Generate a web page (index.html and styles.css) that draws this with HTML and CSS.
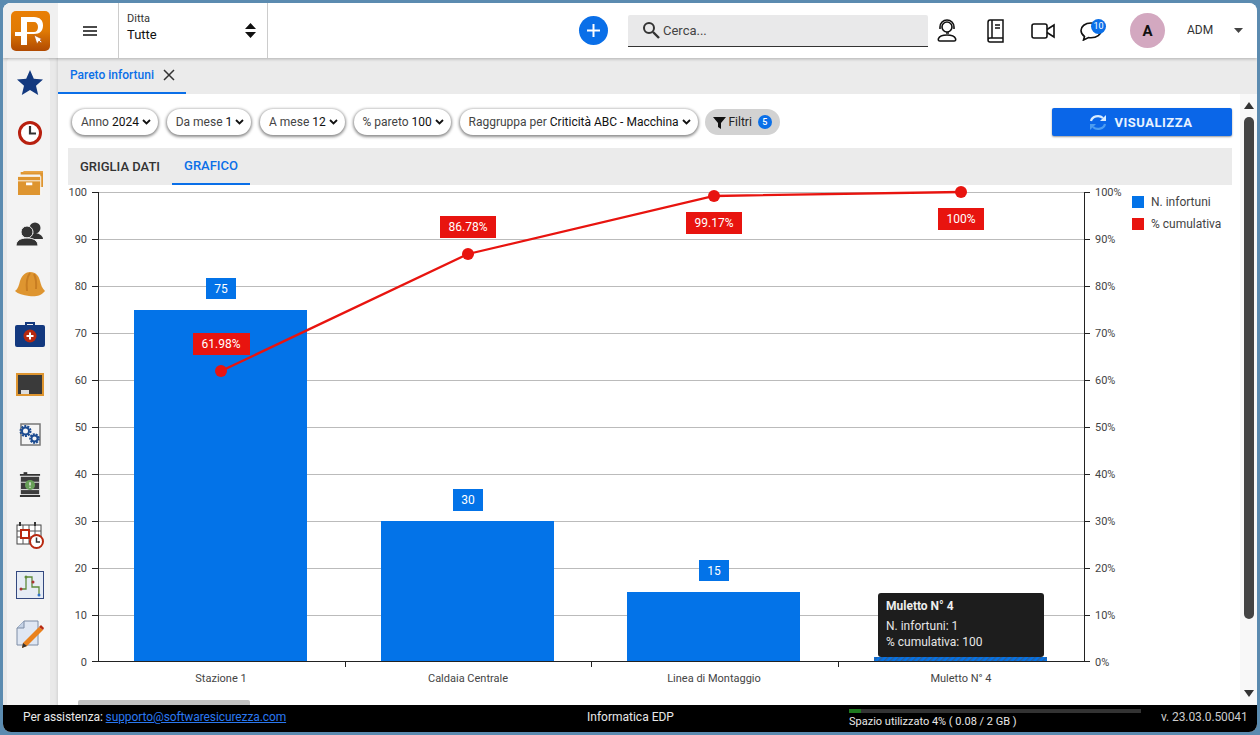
FILE: index.html
```html
<!DOCTYPE html>
<html lang="it">
<head>
<meta charset="utf-8">
<title>Pareto infortuni</title>
<link rel="stylesheet" href="styles.css">
</head>
<body>
<div class="app">
  <header class="topbar">
    <div class="logo-cell">
      <svg class="logo" width="39" height="40" viewBox="0 0 39 40">
        <defs><linearGradient id="lg" x1="0" y1="0" x2="0" y2="1"><stop offset="0" stop-color="#e97f05"/><stop offset=".5" stop-color="#e07a05"/><stop offset="1" stop-color="#b04a02"/></linearGradient></defs>
        <rect width="39" height="40" rx="5" fill="url(#lg)"/>
        <path fill-rule="evenodd" d="M10 6h13c6 0 9 3.500 9 8.500s-3 8.500-9 8.500h-7v11h-6V25H4v-4h6zM16 11v10h7c2.500 0 4-2 4-5s-1.500-5-4-5z" fill="#fff"/>
        <path d="M23 24l3 9 2-3 2 2 1-1-2-2 2-1z" fill="#fff" stroke="#b04a02" stroke-width=".6"/>
      </svg>
    </div>
    <div class="menu-cell">
      <svg width="14" height="10" viewBox="0 0 14 10"><path d="M0 1h14M0 5h14M0 9h14" stroke="#111" stroke-width="1.600"/></svg>
    </div>
    <div class="ditta-cell">
      <div class="ditta-text"><span class="ditta-label">Ditta</span><span class="ditta-value">Tutte</span></div>
      <svg width="11" height="15" viewBox="0 0 11 15"><path d="M5.500 0L11 6H0zM5.500 15L0 9h11z" fill="#111"/></svg>
    </div>
    <div class="top-right">
      <button class="plus" type="button"><svg width="13" height="13" viewBox="0 0 13 13"><path d="M6.500 0v13M0 6.500h13" stroke="#fff" stroke-width="2"/></svg></button>
      <div class="search">
        <svg width="18" height="18" viewBox="0 0 18 18"><circle cx="7" cy="7" r="5" fill="none" stroke="#333" stroke-width="2"/><path d="M11 11l6 6" stroke="#333" stroke-width="2.400"/></svg>
        <span class="search-text">Cerca...</span>
      </div>
      <div class="top-icons">
        <span class="top-icon"><svg width="20" height="24" viewBox="0 0 20 24" fill="none" stroke="#111" stroke-width="1.600"><circle cx="10" cy="8" r="5"/><path d="M3 10V8a7 7 0 0 1 14 0v2M12 14h-3"/><path d="M3 22c-1.500 0-2-1-1.500-2.500C2.500 17 6 16 10 16s7.500 1 8.500 3.500c.5 1.500 0 2.500-1.500 2.500z"/></svg></span>
        <span class="top-icon book"><svg width="19" height="24" viewBox="0 0 19 24" fill="none" stroke="#111" stroke-width="1.500"><path d="M3 21V3.500C3 2 4 1 5 1h13v18H5c-1.500 0-2 1-2 2s.5 2 2 2h13v-4"/><path d="M7 1v18M10 6h5M10 9h5"/></svg></span>
        <span class="top-icon"><svg width="24" height="16" viewBox="0 0 24 16" fill="none" stroke="#111" stroke-width="1.600"><rect x="1" y="1" width="15" height="14" rx="2"/><path d="M16 6.500L23 2v12l-7-4.500"/></svg></span>
        <span class="top-icon chat"><svg width="22" height="20" viewBox="0 0 22 20" fill="none" stroke="#111" stroke-width="1.600"><path d="M11 2C5 2 1 5.500 1 9.500c0 2.500 1.500 4.500 3.500 6L3.500 19l5-2.500c1 .3 1.700.3 2.500.3 6 0 10-3.300 10-7.300S17 2 11 2z"/></svg><span class="chat-badge">10</span></span>
      </div>
      <span class="avatar">A</span>
      <span class="adm">ADM</span>
      <svg class="adm-caret" width="9" height="5" viewBox="0 0 9 5"><path d="M0 0h9L4.500 5z" fill="#444"/></svg>
    </div>
  </header>

  <div class="body-row">
    <nav class="sidebar">
      <div class="side-panel">
        <svg width="28" height="28" viewBox="0 0 28 28"><path d="M14 1l3.800 8.800 9.200.8-7 6.100 2.200 9.300-8.200-5-8.200 5L8 16.700l-7-6.100 9.200-.8z" fill="#13397f"/></svg>
        <svg width="26" height="26" viewBox="0 0 26 26"><circle cx="13" cy="13" r="10.500" fill="#fff" stroke="#b8200f" stroke-width="3"/><path d="M13 6v7.500h6" fill="none" stroke="#333" stroke-width="2.200"/></svg>
        <svg width="27" height="25" viewBox="0 0 30 28"><path d="M4 1h25v17h-3V4H4z" fill="#de9530"/><path d="M7 0h22v2H7z" fill="#e8a445"/><path d="M1 6h25v21H1z" fill="#de9530"/><path d="M1 11h25" stroke="#fff" stroke-width="1"/><path d="M10 13h7v3h-7z" fill="#fff"/><path d="M26 6h1v21h-1z" fill="#fff"/><path d="M1 6h25" stroke="#fff"/></svg>
        <svg width="28" height="26" viewBox="0 0 28 26"><circle cx="19" cy="7" r="5.500" fill="#333"/><path d="M13 18c0-4 4-6 6-6s8 2 8 6z" fill="#333"/><circle cx="11" cy="11" r="6" fill="#333" stroke="#f2f2f2"/><path d="M0 25c0-6 5-8 11-8s11 2 11 8z" fill="#333" stroke="#f2f2f2"/></svg>
        <svg width="30" height="26" viewBox="0 0 30 26"><path d="M0 20C3 18 4 14 5 10 7 4 11 1 15 1c6 0 9 4 10 9 1 4 2 7 5 10-4 5-10 6-16 5-6-1-11-2-14-5z" fill="#de9530"/><path d="M15 2c-3 4-4 10-3 18M19 3c2 4 2.500 9 2 15" stroke="#c87d22" stroke-width="2" fill="none"/></svg>
        <svg width="30" height="26" viewBox="0 0 30 26"><path d="M11 4V2h8v2" fill="none" stroke="#13397f" stroke-width="2"/><rect y="4" width="30" height="22" rx="2" fill="#13397f"/><circle cx="15" cy="15" r="6.500" fill="#b8280f"/><path d="M15 11.500v7M11.500 15h7" stroke="#fff" stroke-width="2"/></svg>
        <svg width="28" height="23" viewBox="0 0 28 23"><rect x="1" y="1" width="26" height="21" fill="#3a3a3a" stroke="#de9530" stroke-width="2"/><rect x="5" y="17" width="8" height="4" fill="#ddd"/></svg>
        <svg width="22" height="23" viewBox="0 0 22 23"><rect x="2" y="1" width="19" height="21" fill="#f4f4f4" stroke="#777" stroke-width="1.500"/><circle cx="6.500" cy="8" r="5" fill="none" stroke="#1d4c91" stroke-width="2" stroke-dasharray="2 1.100"/><circle cx="6.500" cy="8" r="3.500" fill="none" stroke="#1d4c91" stroke-width="2"/><circle cx="15.500" cy="15.500" r="4.300" fill="none" stroke="#1d4c91" stroke-width="2" stroke-dasharray="2 1"/><circle cx="15.500" cy="15.500" r="3" fill="none" stroke="#1d4c91" stroke-width="1.800"/></svg>
        <svg width="22" height="30" viewBox="0 0 24 30"><path d="M1 3h22v2H1zM1 26h22v2H1z" fill="#333"/><path d="M2 6h20v19H2z" fill="#3c3c3c"/><path d="M2 12h20M2 20h20" stroke="#f2f2f2"/><rect x="5" y="1" width="4" height="2" fill="#333"/><circle cx="12" cy="15" r="5.500" fill="#68a058"/><path d="M12 12v3.500M12 17v1" stroke="#eee" stroke-width="1.500"/></svg>
        <svg width="28" height="28" viewBox="0 0 28 28"><rect x="1" y="4" width="24" height="19" fill="#fff" stroke="#444"/><path d="M1 10h24M1 16h24M7 4v19M13 4v19M19 4v19" stroke="#555"/><path d="M4 1v4M19 1v4" stroke="#333" stroke-width="2"/><rect x="5" y="9" width="8" height="8" fill="#fff" stroke="#b8280f" stroke-width="2"/><circle cx="20.500" cy="20.500" r="6.500" fill="#fff" stroke="#b8280f" stroke-width="2"/><path d="M20.500 16.500v4.500h3.500" fill="none" stroke="#333" stroke-width="1.500"/></svg>
        <svg width="28" height="28" viewBox="0 0 28 28"><rect x=".5" y=".5" width="27" height="27" fill="#e6ecf5" stroke="#33487f"/><path d="M5 18h5V6h6v10h7v8" fill="none" stroke="#5f8a3a" stroke-width="1.300"/><circle cx="5" cy="18" r="1.500" fill="#a33"/><circle cx="10" cy="6" r="1.500" fill="#5f8a3a"/><circle cx="17" cy="11" r="1.500" fill="#a33"/><circle cx="23" cy="24" r="1.500" fill="#2f73c9"/></svg>
        <svg width="28" height="30" viewBox="0 0 28 30"><path d="M8 1h14v24H1V8z" fill="#dfe7f3" stroke="#7d8ca5"/><path d="M8 1v7H1" fill="#c4d2e6" stroke="#7d8ca5"/><path d="M7 23L23 7l4 3-16 16-5 2z" fill="#e9811c"/><path d="M23 7l2-2 3 3-1 2z" fill="#b8280f"/><path d="M7 23l-1 5 5-2z" fill="#333"/></svg>
      </div>
    </nav>

    <main class="main">
      <div class="tabbar">
        <div class="tab"><span>Pareto infortuni</span><svg width="12" height="12" viewBox="0 0 12 12"><path d="M1 1l10 10M11 1L1 11" stroke="#333" stroke-width="1.500"/></svg></div>
      </div>
      <div class="content">
        <div class="page">
          <div class="filters">
            <span class="pill"><span>Anno <b>2024</b></span><svg class="chev" width="9" height="6" viewBox="0 0 9 6"><path d="M1 1l3.500 3.500L8 1" fill="none" stroke="#111" stroke-width="1.800"/></svg></span>
            <span class="pill"><span>Da mese <b>1</b></span><svg class="chev" width="9" height="6" viewBox="0 0 9 6"><path d="M1 1l3.500 3.500L8 1" fill="none" stroke="#111" stroke-width="1.800"/></svg></span>
            <span class="pill"><span>A mese <b>12</b></span><svg class="chev" width="9" height="6" viewBox="0 0 9 6"><path d="M1 1l3.500 3.500L8 1" fill="none" stroke="#111" stroke-width="1.800"/></svg></span>
            <span class="pill"><span>% pareto <b>100</b></span><svg class="chev" width="9" height="6" viewBox="0 0 9 6"><path d="M1 1l3.500 3.500L8 1" fill="none" stroke="#111" stroke-width="1.800"/></svg></span>
            <span class="pill"><span>Raggruppa per <b>Criticità ABC - Macchina</b></span><svg class="chev" width="9" height="6" viewBox="0 0 9 6"><path d="M1 1l3.500 3.500L8 1" fill="none" stroke="#111" stroke-width="1.800"/></svg></span>
            <span class="filtri"><svg width="13" height="13" viewBox="0 0 13 13"><path d="M0 1h13L8 7v6L5 11V7z" fill="#111"/></svg><span class="filtri-text">Filtri</span><span class="badge">5</span></span>
            <button class="visualizza" type="button">
              <svg width="18" height="17" viewBox="0 0 18 17" fill="none" stroke-width="2.200"><path d="M2 7a7 6 0 0 1 12-3" stroke="#d8ecff"/><path d="M17 1v6h-6z" fill="#d8ecff"/><path d="M16 10a7 6 0 0 1-12 3" stroke="#4d9df0"/><path d="M1 16v-6h6z" fill="#4d9df0"/></svg>
              VISUALIZZA
            </button>
          </div>
          <div class="subtabs">
            <span class="subtab">GRIGLIA DATI</span>
            <span class="subtab active">GRAFICO</span>
          </div>
          <div class="chart">
            <svg class="chart-svg" width="1164" height="514" viewBox="68 186 1164 514">
              <defs><pattern id="hatch" width="4" height="4" patternUnits="userSpaceOnUse" patternTransform="rotate(45)"><rect width="4" height="4" fill="#0373e8"/><rect width="1.500" height="4" fill="#2a5f9c"/></pattern></defs>
              <g class="grid">
                <path d="M98 192.500H1084M98 239.500H1084M98 286.500H1084M98 333.500H1084M98 380.500H1084M98 427.500H1084M98 474.500H1084M98 521.500H1084M98 568.500H1084M98 615.500H1084"/>
              </g>
              <rect x="134" y="310" width="173" height="352" fill="#0373e8"/>
              <rect x="381" y="521" width="173" height="141" fill="#0373e8"/>
              <rect x="627" y="592" width="173" height="70" fill="#0373e8"/>
              <rect x="874" y="657" width="173" height="5" fill="url(#hatch)"/>
              <g class="axis">
                <path d="M98.500 192V662M1084.500 192V662M92 192.500H98M92 239.500H98M92 286.500H98M92 333.500H98M92 380.500H98M92 427.500H98M92 474.500H98M92 521.500H98M92 568.500H98M92 615.500H98M92 661.500H1090M1084 192.500H1090M1084 239.500H1090M1084 286.500H1090M1084 333.500H1090M1084 380.500H1090M1084 427.500H1090M1084 474.500H1090M1084 521.500H1090M1084 568.500H1090M1084 615.500H1090M345.500 662V667M591.500 662V667M838.500 662V667"/>
              </g>
              <g class="y-left">
                <text x="87" y="196">100</text><text x="87" y="243">90</text><text x="87" y="290">80</text><text x="87" y="337">70</text><text x="87" y="384">60</text><text x="87" y="431">50</text><text x="87" y="478">40</text><text x="87" y="525">30</text><text x="87" y="572">20</text><text x="87" y="619">10</text><text x="87" y="666">0</text>
              </g>
              <g class="y-right">
                <text x="1095" y="196">100%</text><text x="1095" y="243">90%</text><text x="1095" y="290">80%</text><text x="1095" y="337">70%</text><text x="1095" y="384">60%</text><text x="1095" y="431">50%</text><text x="1095" y="478">40%</text><text x="1095" y="525">30%</text><text x="1095" y="572">20%</text><text x="1095" y="619">10%</text><text x="1095" y="666">0%</text>
              </g>
              <g class="x-labels">
                <text x="221" y="682">Stazione 1</text><text x="468" y="682">Caldaia Centrale</text><text x="714" y="682">Linea di Montaggio</text><text x="961" y="682">Muletto N° 4</text>
              </g>
              <polyline points="221,371 468,254 714,196 961,192" fill="none" stroke="#e8140f" stroke-width="2.300"/>
              <g fill="#e8140f">
                <circle cx="221" cy="371" r="6"/><circle cx="468" cy="254" r="6"/><circle cx="714" cy="196" r="6"/><circle cx="961" cy="192" r="6"/>
              </g>
              <g class="val">
                <rect x="206" y="278" width="30" height="21" fill="#0373e8"/><text x="221" y="293">75</text>
                <rect x="453" y="489" width="30" height="22" fill="#0373e8"/><text x="468" y="504">30</text>
                <rect x="699" y="560" width="30" height="21" fill="#0373e8"/><text x="714" y="575">15</text>
                <rect x="193" y="333" width="57" height="22" fill="#e8140f"/><text x="221" y="348">61.98%</text>
                <rect x="440" y="216" width="56" height="22" fill="#e8140f"/><text x="468" y="231">86.78%</text>
                <rect x="686" y="212" width="56" height="22" fill="#e8140f"/><text x="714" y="227">99.17%</text>
                <rect x="938" y="208" width="46" height="22" fill="#e8140f"/><text x="961" y="223">100%</text>
              </g>
              <rect x="1132" y="196" width="12" height="12" fill="#0373e8"/>
              <text class="legend" x="1151" y="206">N. infortuni</text>
              <rect x="1132" y="218" width="12" height="12" fill="#e8140f"/>
              <text class="legend" x="1151" y="228">% cumulativa</text>
            </svg>
            <div class="tooltip">
              <strong>Muletto N° 4</strong>
              <span>N. infortuni: 1</span>
              <span>% cumulativa: 100</span>
            </div>
          </div>
          <div class="hscroll"></div>
        </div>
        <div class="vscroll">
          <svg width="10" height="7" viewBox="0 0 10 7"><path d="M5 0l5 7H0z" fill="#333"/></svg>
          <div class="thumb"></div>
          <svg class="v-down" width="10" height="7" viewBox="0 0 10 7"><path d="M0 0h10L5 7z" fill="#333"/></svg>
        </div>
      </div>
    </main>
  </div>

  <footer class="footer">
    <div class="foot-left">Per assistenza: <a href="#">supporto@softwaresicurezza.com</a></div>
    <div class="foot-mid">Informatica EDP</div>
    <div class="foot-space">
      <div class="progress"><div class="progress-fill" style="width:4%"></div></div>
      <div class="space-text">Spazio utilizzato 4% ( 0.08 / 2 GB )</div>
    </div>
    <div class="foot-ver">v. 23.03.0.50041</div>
  </footer>
</div>
</body>
</html>
```
FILE: styles.css
```css
* { box-sizing: border-box; }
html, body { margin: 0; height: 100%; }
body {
  background: #5b8bb0;
  font-family: Roboto, "Liberation Sans", sans-serif;
  font-size: 12px;
  color: #222;
  overflow: hidden;
  padding: 3px;
}
.app {
  height: 729px;
  display: flex;
  flex-direction: column;
  background: #fff;
  border-radius: 8px;
  overflow: hidden;
}
.topbar {
  height: 55px;
  flex: none;
  display: flex;
  align-items: stretch;
  background: #fff;
  position: relative;
  z-index: 2;
  box-shadow: 0 1px 3px rgba(0,0,0,.25);
}
.logo-cell {
  width: 55px;
  background: #f0f0f0;
  display: flex;
  align-items: center;
  padding-left: 8px;
}
.menu-cell {
  width: 61px;
  display: flex;
  align-items: center;
  justify-content: center;
  padding-left: 4px;
  border-right: 1px solid #ccc;
}
.ditta-cell {
  width: 149px;
  border-right: 1px solid #ccc;
  display: flex;
  align-items: center;
  justify-content: space-between;
  padding: 0 11px 0 8px;
}
.ditta-text { display: flex; flex-direction: column; margin-bottom: 7px; }
.ditta-label { font-size: 11px; color: #333; line-height: 14px; }
.ditta-value { font-size: 13px; color: #111; line-height: 17px; }
.top-right {
  flex: 1;
  display: flex;
  align-items: center;
  padding-left: 311px;
}
.plus {
  width: 29px;
  height: 29px;
  border: 0;
  border-radius: 50%;
  background: #0a6fe8;
  padding: 0;
  display: flex;
  align-items: center;
  justify-content: center;
  flex: none;
}
.search {
  width: 300px;
  height: 32px;
  margin-left: 20px;
  background: #e9e9ea;
  border-bottom: 1px solid #333;
  border-radius: 2px 2px 0 0;
  display: flex;
  align-items: center;
  gap: 3px;
  padding-left: 14px;
  font-size: 13px;
  color: #444;
  flex: none;
}
.search-text { padding-top: 1px; }
.top-icons { display: flex; align-items: center; margin-left: -5px; flex: none; }
.top-icon {
  width: 48px;
  display: flex;
  align-items: center;
  justify-content: center;
  position: relative;
}
.top-icon.book { padding-right: 2px; }
.chat-badge {
  position: absolute;
  top: -2px;
  left: 24px;
  width: 15px;
  height: 15px;
  border-radius: 50%;
  background: #0a6fe8;
  color: #fff;
  font-size: 9px;
  line-height: 15px;
  text-align: center;
}
.avatar {
  width: 35px;
  height: 35px;
  margin-left: 15px;
  border-radius: 50%;
  background: #d3a8c0;
  color: #111;
  font-size: 15px;
  font-weight: 700;
  display: flex;
  align-items: center;
  justify-content: center;
  flex: none;
}
.adm { margin: 0 0 2px 22px; font-size: 12px; color: #333; }
.adm-caret { margin-left: 21px; flex: none; }
.body-row { flex: 1; display: flex; min-height: 0; }
.sidebar {
  width: 55px;
  flex: none;
  background: #e9e9e9;
  padding: 0 8px 0 4px;
  box-shadow: inset -3px 0 3px -2px rgba(0,0,0,.1);
}
.side-panel {
  height: 100%;
  background: #f3f3f3;
  display: grid;
  grid-auto-rows: 50.2px;
  justify-items: center;
  align-items: center;
  border-radius: 4px 4px 0 0;
  padding-left: 3px;
}
.main { flex: 1; min-width: 0; display: flex; flex-direction: column; }
.tabbar { height: 36px; flex: none; background: #ebebeb; display: flex; }
.tab {
  width: 128px;
  display: flex;
  align-items: center;
  gap: 9px;
  padding: 0 0 0 12px;
  color: #0a6fe8;
  font-size: 12px;
  font-weight: 500;
  border-bottom: 2px solid #0a6fe8;
}
.content { flex: 1; min-height: 0; display: flex; }
.page { flex: 1; min-width: 0; padding: 14px 8px 0 10px; display: flex; flex-direction: column; position: relative; }
.filters { display: flex; align-items: flex-start; height: 27px; padding-left: 4px; }
.pill {
  height: 26px;
  margin: 1px 8.9px 0 0;
  background: #fff;
  border-radius: 13px;
  box-shadow: 0 1px 3px 1px rgba(0,0,0,.45);
  padding: 0 6.9px 0 9px;
  display: flex;
  align-items: center;
  font-size: 12px;
  color: #444;
  white-space: pre;
}
.pill b { font-weight: 400; color: #111; }
.pill .chev { margin-left: 3px; }
.filtri {
  height: 26px;
  margin: 1px 0 0 -1px;
  padding: 0 8px;
  background: #d2d2d2;
  border-radius: 13px;
  display: flex;
  align-items: center;
  font-size: 12px;
  color: #222;
}
.filtri-text { margin-left: 2px; }
.badge {
  width: 14px;
  height: 14px;
  margin-left: 6px;
  border-radius: 50%;
  background: #0a6fe8;
  color: #fff;
  font-size: 9px;
  font-weight: 500;
  display: flex;
  align-items: center;
  justify-content: center;
}
.visualizza {
  margin-left: auto;
  width: 180px;
  height: 28px;
  border: 0;
  border-radius: 2px;
  background: #0a66e8;
  color: #e8f3ff;
  font: 700 13px Roboto, sans-serif;
  letter-spacing: .5px;
  display: flex;
  align-items: center;
  justify-content: center;
  gap: 8px;
  padding: 0 3px 0 0;
  box-shadow: 0 1px 2px rgba(0,0,0,.4);
}
.subtabs {
  margin-top: 13px;
  height: 37px;
  flex: none;
  background: #ebebeb;
  display: flex;
}
.subtab {
  display: flex;
  align-items: center;
  justify-content: center;
  padding: 0 12px;
  font-size: 13px;
  font-weight: 500;
  color: #333;
}
.subtab.active { color: #0a6fe8; border-bottom: 2px solid #0a6fe8; width: 78px; padding: 0; }
.chart { position: relative; height: 514px; flex: none; margin-top: 1px; }
.chart-svg { display: block; }
.grid path { stroke: #bbb; stroke-width: 1; fill: none; }
.axis path { stroke: #222; stroke-width: 1; fill: none; }
.chart-svg text { font-family: Roboto, sans-serif; font-size: 11px; fill: #444; }
.y-left text { text-anchor: end; }
.x-labels text { text-anchor: middle; }
.chart-svg .val text { text-anchor: middle; font-size: 12px; fill: #fff; }
.chart-svg .legend { font-size: 12px; fill: #444; }
.tooltip {
  position: absolute;
  left: 810px;
  top: 407px;
  width: 166px;
  height: 64px;
  background: #1d1d1d;
  border-radius: 3px;
  color: #e6e6e6;
  padding: 5px 8px;
  font-size: 12px;
  line-height: 16px;
  display: flex;
  flex-direction: column;
}
.tooltip strong { color: #eee; font-weight: 700; margin-bottom: 4px; }
.hscroll {
  position: absolute;
  left: 20px;
  bottom: 0;
  width: 172px;
  height: 5px;
  background: #c2c2c2;
  border-radius: 2px 2px 0 0;
}
.vscroll {
  width: 17px;
  flex: none;
  background: #f8f8f8;
  display: flex;
  flex-direction: column;
  align-items: center;
  padding-top: 8px;
  position: relative;
}
.thumb {
  width: 10px;
  height: 502px;
  margin-top: 8px;
  border-radius: 5px;
  background: #444;
}
.v-down { position: absolute; bottom: 8px; left: 3.5px; }
.footer {
  height: 27px;
  flex: none;
  background: #000;
  color: #e8e8e8;
  font-size: 12px;
  display: flex;
  align-items: center;
  position: relative;
  z-index: 3;
  padding-bottom: 3px;
}
.foot-left { width: 584px; padding-left: 20px; letter-spacing: -.1px; }
.foot-left a { color: #2a78f0; }
.foot-mid { width: 262px; }
.foot-space { width: 292px; padding-top: 4px; align-self: flex-start; }
.progress { height: 4px; background: #333; }
.progress-fill { height: 100%; background: #1f7a1f; }
.space-text { margin-top: 2px; font-size: 11px; line-height: 14px; }
.foot-ver { margin-left: 20px; color: #ccc; letter-spacing: -.1px; }
```
